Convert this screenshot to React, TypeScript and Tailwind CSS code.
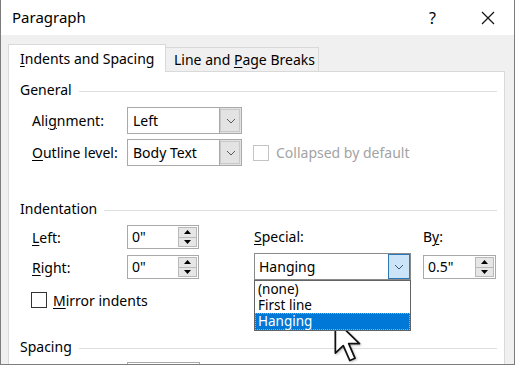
import React from "react";

// Word "Paragraph" dialog — Indents and Spacing tab, Special dropdown open.

function Chevron({ className = "" }: { className?: string }) {
  return (
    <svg width="10" height="6" viewBox="0 0 10 6" className={className}>
      <path d="M1 1 L5 5 L9 1" fill="none" stroke="currentColor" strokeWidth="1" />
    </svg>
  );
}

function Key({ children }: { children: React.ReactNode }) {
  return <span className="underline underline-offset-2 decoration-1">{children}</span>;
}

function GroupHeader({ title }: { title: string }) {
  return (
    <div className="flex items-center h-[20px] pl-[11px] pr-[7px]">
      <span className="leading-[20px]">{title}</span>
      <div className="flex-1 h-px bg-[#dedede] ml-[7px] mt-[2px]" />
    </div>
  );
}

function Select({ value, width }: { value: string; width: string }) {
  return (
    <div className={`flex h-[27px] border border-[#a9a9a9] bg-white ${width}`}>
      <div className="flex-1 pl-[5px] leading-[25px]">{value}</div>
      <div className="w-[22px] h-full bg-[#e3e3e3] border-l border-[#a9a9a9] outline outline-1 -outline-offset-2 outline-[#c8c8c8] flex items-center justify-center text-[#5a5a5a]">
        <Chevron />
      </div>
    </div>
  );
}

function Spin({ value, width }: { value: string; width: string }) {
  return (
    <div className={`flex h-[24px] border border-[#a9a9a9] bg-white ${width}`}>
      <div className="flex-1 pl-[4px] leading-[22px]">{value}</div>
      <div className="w-[20px] flex flex-col py-[1px] pr-[1px]">
        <div className="flex-1 bg-[#e6e6e6] border border-[#b9b9b9] flex items-center justify-center">
          <svg width="7" height="4" viewBox="0 0 7 4">
            <path d="M0 4 L3.5 0 L7 4 Z" fill="#000" />
          </svg>
        </div>
        <div className="flex-1 bg-[#e6e6e6] border border-t-0 border-[#b9b9b9] flex items-center justify-center">
          <svg width="7" height="4" viewBox="0 0 7 4">
            <path d="M0 0 L3.5 4 L7 0 Z" fill="#000" />
          </svg>
        </div>
      </div>
    </div>
  );
}

function Cursor() {
  return (
    <svg
      width="31"
      height="46"
      viewBox="0 0 14 21"
      className="absolute left-[333px] top-[318px] drop-shadow-[1px_1px_1px_rgba(0,0,0,0.25)]"
    >
      <path
        d="M1 1 L1 16 L4.6 12.6 L7.6 19.4 L10 18.4 L7.1 11.7 L12 11.7 Z"
        fill="#fff"
        stroke="#111"
        strokeWidth="0.8"
        strokeLinejoin="round"
      />
    </svg>
  );
}

export default function App() {
  return (
    <div className="relative w-[519px] h-[378px] bg-white overflow-hidden text-[14px] text-black font-['Noto_Sans',sans-serif]">
      <div className="w-[515px] h-[365px] flex flex-col border-x border-b border-[#7d7d7d] overflow-hidden">
        {/* title bar */}
        <div className="h-[35px] shrink-0 bg-white flex items-center pl-[11px]">
          <span className="text-[15px]">Paragraph</span>
          <span className="ml-auto text-[16px] mr-[45px]">?</span>
          <svg width="14" height="14" viewBox="0 0 14 14" className="mr-[19px]">
            <path d="M1 1 L13 13 M13 1 L1 13" stroke="#111" strokeWidth="1.2" />
          </svg>
        </div>

        {/* body */}
        <div className="flex-1 min-h-0 bg-[#f0f0f0] pl-[7px] pr-[9px] pt-[9px] flex flex-col">
          {/* tabs */}
          <div className="flex items-end h-[27px] shrink-0">
            <div className="relative z-10 h-[28px] -mb-px w-[158px] bg-white border-x border-t border-[#d9d9d9] pl-[11px] leading-[28px]">
              <Key>I</Key>ndents and Spacing
            </div>
            <div className="h-[24px] w-[153px] bg-[#f0f0f0] border-t border-r border-[#d9d9d9] pl-[8px] leading-[24px]">
              Line and <Key>P</Key>age Breaks
            </div>
          </div>

          {/* panel */}
          <div className="relative flex-1 bg-white border border-[#d9d9d9] pt-[8px] flex flex-col">
            <GroupHeader title="General" />

            <div className="flex items-center pl-[23px] mt-[7px]">
              <span className="w-[95px]">Ali<Key>g</Key>nment:</span>
              <Select value="Left" width="w-[115px]" />
            </div>
            <div className="flex items-center pl-[23px] mt-[5px]">
              <span className="w-[95px]">
                <Key>O</Key>utline level:
              </span>
              <Select value="Body Text" width="w-[115px]" />
              <div className="ml-[11px] w-[16px] h-[16px] border border-[#c4c4c4] bg-white" />
              <span className="ml-[7px] text-[#a3a3a3]">Collapsed by default</span>
            </div>

            <div className="mt-[33px]">
              <GroupHeader title="Indentation" />
            </div>

            <div className="flex pl-[23px] mt-[6px]">
              <div className="w-[222px] flex flex-col">
                <div className="flex items-center h-[24px]">
                  <span className="w-[95px]">
                    <Key>L</Key>eft:
                  </span>
                  <Spin value={'0"'} width="w-[72px]" />
                </div>
                <div className="flex items-center h-[24px] mt-[6px]">
                  <span className="w-[95px]">
                    <Key>R</Key>ight:
                  </span>
                  <Spin value={'0"'} width="w-[72px]" />
                </div>
                <div className="flex items-center h-[16px] mt-[13px] -ml-px">
                  <div className="w-[16px] h-[16px] border border-[#333] bg-white" />
                  <span className="ml-[6px]">
                    <Key>M</Key>irror indents
                  </span>
                </div>
              </div>

              <div className="w-[169px] flex flex-col">
                <div className="h-[24px] leading-[24px]">
                  <Key>S</Key>pecial:
                </div>
                <div className="relative mt-[4px] w-[157px]">
                  <div className="flex h-[27px] border border-[#8a8a8a] bg-white">
                    <div className="flex-1 pl-[4px] leading-[25px]">Hanging</div>
                    <div className="w-[22px] h-full bg-[#cce4f7] border border-[#2f77b5] flex items-center justify-center text-[#3c5a78]">
                      <Chevron />
                    </div>
                  </div>
                  <div className="absolute left-0 top-full w-[157px] h-[51px] z-20 bg-white border border-[#646464] flex flex-col text-[13.5px]">
                    <div className="h-[16px] leading-[16px] pl-[3px]">(none)</div>
                    <div className="h-[16px] leading-[16px] pl-[3px]">First line</div>
                    <div className="h-[17px] leading-[15px] pl-[2px] bg-[#0078d7] text-white border border-dotted border-[#e0a060]">
                      Hanging
                    </div>
                  </div>
                </div>
              </div>

              <div className="flex flex-col">
                <div className="h-[24px] leading-[24px]">
                  B<Key>y</Key>:
                </div>
                <div className="mt-[6px]">
                  <Spin value={'0.5"'} width="w-[73px]" />
                </div>
              </div>
            </div>

            <div className="mt-[29px]">
              <GroupHeader title="Spacing" />
            </div>
            {/* top edge of the next (cropped) field */}
            <div className="ml-[118px] mt-[5px] w-[73px] h-[24px] shrink-0 border border-[#a9a9a9]" />
          </div>
        </div>
      </div>
      <Cursor />
    </div>
  );
}
